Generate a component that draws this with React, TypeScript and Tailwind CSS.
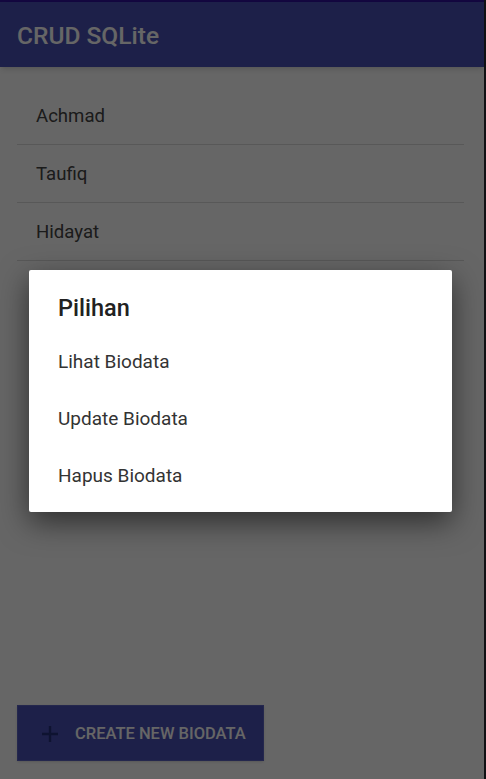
import React from "react";

export default function App() {
  const names = ["Achmad", "Taufiq", "Hidayat"];
  const options = ["Lihat Biodata", "Update Biodata", "Hapus Biodata"];
  return (
    <div
      className="relative flex h-[779px] w-[486px] overflow-hidden bg-[#2c2c34]"
      style={{ fontFamily: "Roboto, 'Noto Sans', sans-serif" }}
    >
      <div className="flex h-full w-[484px] flex-col bg-white">
        <div className="h-[2px] bg-[#30129e]" />
        <div className="flex h-[65px] items-center bg-[#4a51b6] px-[17px] pt-[3px] shadow-md">
          <span className="text-[24.5px] font-medium text-[#ffffff]">CRUD SQLite</span>
        </div>
        <div className="flex-1 pl-[17px] pr-[20px] pt-[20px]">
          {names.map((n) => (
            <div
              key={n}
              className="flex h-[58px] items-center border-b border-[#dcdcdc] pl-[19px] pt-[2px] text-[18.6px] text-[#444444]"
            >
              {n}
            </div>
          ))}
        </div>
        <div className="px-[17px] pb-[18px]">
          <button className="flex h-[56px] w-[247px] items-center gap-[16px] border border-[#5a62c0] bg-[#4a51b6] pl-[23px] pt-[3px] text-[16.5px] font-medium text-white shadow">
            <svg width="18" height="18" viewBox="0 0 18 18" className="shrink-0 -mt-[2px]">
              <path d="M9 1v16M1 9h16" stroke="#23307a" strokeWidth="2.4" fill="none" />
            </svg>
            <span>CREATE NEW BIODATA</span>
          </button>
        </div>
      </div>
      <div className="absolute inset-0 bg-black/60" />
      <div className="absolute left-[29px] top-[270px] w-[423px] rounded-[2px] bg-white pb-[7px] pt-[22px] shadow-[0_10px_30px_rgba(0,0,0,0.55)]">
        <div className="px-[29px] pb-[10px] text-[23.5px] font-medium leading-[32px] text-[#212121]">
          Pilihan
        </div>
        {options.map((o) => (
          <div
            key={o}
            className="flex h-[57px] items-center px-[29px] text-[19px] text-[#333333]"
          >
            {o}
          </div>
        ))}
      </div>
    </div>
  );
}
